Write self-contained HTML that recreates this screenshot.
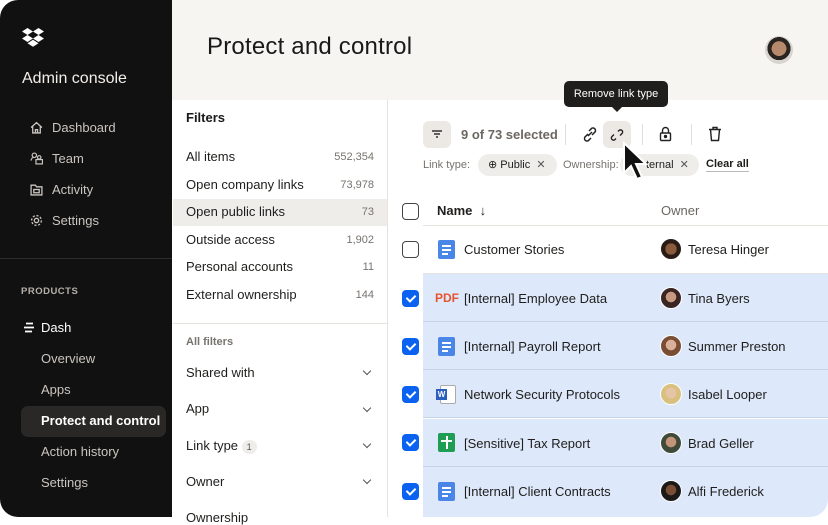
<!DOCTYPE html>
<html><head><meta charset="utf-8"><style>
*{margin:0;padding:0;box-sizing:border-box}
body{width:828px;height:517px;overflow:hidden;background:#fff;font-family:"Liberation Sans",sans-serif;position:relative}
.a{position:absolute}
#side{left:0;top:0;width:172px;height:517px;background:#121111;border-radius:18px 0 0 18px}
.nav{color:#c9c5c0;font-size:13px}
.ic{position:absolute;left:30px}
#hdr{left:172px;top:0;width:656px;height:100px;background:#f7f5f2}
#fp{left:172px;top:100px;width:216px;height:417px;border-right:1px solid #e6e3df}
.fl{font-size:13px;color:#1f1e1c;left:186px}
.fc{font-size:11px;color:#77736e;right:454px}
.chev{right:458px;width:6px;height:6px;border-right:1.3px solid #555;border-bottom:1.3px solid #555;transform:rotate(45deg)}
.row{left:423px;width:405px;height:48px;border-bottom:1px solid #c5d3e8}
.sel{background:#dde8fa}
.cb{left:402px;width:17px;height:17px;border-radius:4px;background:#0b62f0}
.cb:after{content:"";position:absolute;left:5.5px;top:3px;width:4px;height:7px;border-right:2px solid #fff;border-bottom:2px solid #fff;transform:rotate(45deg)}
.nm{left:464px;font-size:13px;color:#1f1e1c}
.ow{left:688px;font-size:13px;color:#1f1e1c}
.av{left:660px;width:22px;height:22px;border-radius:50%;border:1.5px solid #fff}
.doc{left:438px;width:17px;height:19px;border-radius:2px;background:#4a86e8}
.doc i{position:absolute;left:4px;height:1.6px;background:#fff;width:9px}
</style></head><body>
<div class="a" id="side"></div>
<svg class="a" style="left:22px;top:28px" width="22" height="20" viewBox="0 0 22 20"><g fill="#fff"><path d="M5.5 0 0 3.5 5.5 7 11 3.5z"/><path d="M16.5 0 11 3.5 16.5 7 22 3.5z"/><path d="M0 10.5 5.5 14 11 10.5 5.5 7z"/><path d="M16.5 7 11 10.5 16.5 14 22 10.5z"/><path d="M5.5 15.2 11 18.7 16.5 15.2 11 11.7z"/></g></svg>
<div class="a" style="left:22px;top:70px;color:#f2efeb;font-size:16px">Admin console</div>
<svg class="ic" style="top:121px" width="13" height="13" viewBox="0 0 12 12" fill="none" stroke="#c9c5c0" stroke-width="1.2"><path d="M1 6 6 1.5 11 6M2.5 5v6h7V5M5 11V8h2v3"/></svg>
<div class="a nav" style="left:52px;top:120px">Dashboard</div>
<svg class="ic" style="top:152px" width="13" height="13" viewBox="0 0 12 12" fill="none" stroke="#c9c5c0" stroke-width="1.1"><circle cx="4" cy="3" r="2"/><path d="M1 8c0-2 1.5-3 3-3"/><rect x="5.5" y="7" width="6" height="4"/><circle cx="8.5" cy="5" r="1.6"/></svg>
<div class="a nav" style="left:52px;top:151px">Team</div>
<svg class="ic" style="top:183px" width="13" height="13" viewBox="0 0 12 12" fill="none" stroke="#c9c5c0" stroke-width="1.2"><path d="M1 2h4l1 1.5h5V11H1z"/><rect x="3.5" y="6" width="5" height="3"/></svg>
<div class="a nav" style="left:52px;top:182px">Activity</div>
<svg class="ic" style="top:214px" width="13" height="13" viewBox="0 0 12 12" fill="none" stroke="#c9c5c0" stroke-width="1.2"><circle cx="6" cy="6" r="2"/><circle cx="6" cy="6" r="4.5" stroke-dasharray="2 1.5"/></svg>
<div class="a nav" style="left:52px;top:213px">Settings</div>
<div class="a" style="left:0;top:258px;width:172px;height:1px;background:#2e2c2a"></div>
<div class="a" style="left:21px;top:286px;color:#b5b0aa;font-size:9.5px;font-weight:bold;letter-spacing:.5px">PRODUCTS</div>
<svg class="a" style="left:23px;top:322px" width="12" height="11" viewBox="0 0 12 11" stroke="#fff" stroke-width="1.8" fill="none"><path d="M3 1.5h7M1 5.5h10M2 9.5h7"/></svg>
<div class="a" style="left:41px;top:320px;color:#fff;font-size:13px">Dash</div>
<div class="a nav" style="left:41px;top:351px">Overview</div>
<div class="a nav" style="left:41px;top:382px">Apps</div>
<div class="a" style="left:21px;top:406px;width:145px;height:31px;background:#2a2827;border-radius:7px"></div>
<div class="a" style="left:41px;top:413px;color:#fff;font-size:13px;font-weight:bold">Protect and control</div>
<div class="a nav" style="left:41px;top:444px">Action history</div>
<div class="a nav" style="left:41px;top:475px">Settings</div>

<div class="a" id="hdr"></div>
<div class="a" style="left:207px;top:33px;font-size:24px;color:#1a1918;letter-spacing:.2px">Protect and control</div>
<div class="a" style="left:765px;top:36px;width:28px;height:28px;border-radius:50%;background:radial-gradient(circle at 50% 45%,#b58a6c 0 35%,#2a2420 36% 55%,#d8d4cf 56%)"></div>

<div class="a" id="fp"></div>
<div class="a" style="left:186px;top:110px;font-size:13px;font-weight:bold;color:#1a1918">Filters</div>
<div class="a" style="left:173px;top:199px;width:214px;height:27px;background:#efedea"></div>
<div class="a fl" style="top:149px">All items</div><div class="a fc" style="top:151px">552,354</div>
<div class="a fl" style="top:177px">Open company links</div><div class="a fc" style="top:179px">73,978</div>
<div class="a fl" style="top:204px">Open public links</div><div class="a fc" style="top:206px">73</div>
<div class="a fl" style="top:232px">Outside access</div><div class="a fc" style="top:234px">1,902</div>
<div class="a fl" style="top:259px">Personal accounts</div><div class="a fc" style="top:261px">11</div>
<div class="a fl" style="top:287px">External ownership</div><div class="a fc" style="top:289px">144</div>
<div class="a" style="left:173px;top:323px;width:214px;height:1px;background:#e6e3df"></div>
<div class="a" style="left:186px;top:336px;font-size:11px;font-weight:bold;color:#77736e">All filters</div>
<div class="a fl" style="top:365px">Shared with</div><div class="a chev" style="top:368px"></div>
<div class="a fl" style="top:401px">App</div><div class="a chev" style="top:405px"></div>
<div class="a fl" style="top:438px">Link type <span style="display:inline-block;background:#efedea;border-radius:8px;font-size:9px;padding:2px 5px;color:#555">1</span></div><div class="a chev" style="top:441px"></div>
<div class="a fl" style="top:474px">Owner</div><div class="a chev" style="top:477px"></div>
<div class="a fl" style="top:510px">Ownership</div>

<div class="a" style="left:423px;top:121px;width:28px;height:27px;background:#ece9e5;border-radius:6px"></div>
<svg class="a" style="left:431px;top:129px" width="12" height="10" stroke="#333" stroke-width="1.4"><path d="M1 2h10M3 5h6M5 8h2"/></svg>
<div class="a" style="left:461px;top:127px;font-size:13px;font-weight:bold;color:#6b6762">9 of 73 selected</div>
<div class="a" style="left:565px;top:124px;width:1px;height:21px;background:#e1ded9"></div>
<svg class="a" style="left:582px;top:126px" width="16" height="17" viewBox="0 0 16 17" fill="none" stroke="#222" stroke-width="1.5"><path d="M7 5 9 3a2.5 2.5 0 0 1 4 3l-3 3M9 12l-2 2a2.5 2.5 0 0 1-4-3l3-3M6 10l4-4"/></svg>
<div class="a" style="left:603px;top:121px;width:28px;height:27px;background:#ece9e5;border-radius:6px"></div>
<svg class="a" style="left:609px;top:127px" width="16" height="16" viewBox="0 0 16 16" fill="none" stroke="#222" stroke-width="1.4"><path d="M9 4.5l1-1a2 2 0 0 1 3 3l-2 2M7 11.5l-1 1a2 2 0 0 1-3-3l2-2"/></svg>
<div class="a" style="left:642px;top:124px;width:1px;height:21px;background:#e1ded9"></div>
<svg class="a" style="left:659px;top:126px" width="13" height="16" viewBox="0 0 13 16" fill="none" stroke="#222" stroke-width="1.4"><path d="M3.5 7V4.5a3 3 0 0 1 6 0V7"/><rect x="1.5" y="7" width="10" height="7.5" rx="1"/><circle cx="6.5" cy="10.5" r="1" fill="#222"/></svg>
<div class="a" style="left:691px;top:124px;width:1px;height:21px;background:#e1ded9"></div>
<svg class="a" style="left:708px;top:126px" width="14" height="16" viewBox="0 0 14 16" fill="none" stroke="#222" stroke-width="1.4"><path d="M1 3.5h12M5 3.5V1.5h4v2M2.5 3.5l1 11h7l1-11"/></svg>
<div class="a" style="left:564px;top:81px;width:104px;height:26px;background:#1f1e1c;border-radius:5px;color:#fff;font-size:11px;text-align:center;line-height:26px">Remove link type</div>
<div class="a" style="left:611px;top:106px;width:0;height:0;border-left:6px solid transparent;border-right:6px solid transparent;border-top:6px solid #1f1e1c"></div>

<div class="a" style="left:423px;top:159px;font-size:11px;color:#77736e">Link type:</div>
<div class="a" style="left:478px;top:154px;width:79px;height:22px;background:#efedea;border-radius:11px;font-size:11px;color:#1f1e1c;line-height:22px;padding-left:10px">⊕ Public&nbsp;&nbsp;<span style="color:#555">✕</span></div>
<div class="a" style="left:563px;top:159px;font-size:11px;color:#77736e">Ownership:</div>
<div class="a" style="left:620px;top:154px;width:79px;height:22px;background:#efedea;border-radius:11px;font-size:11px;color:#1f1e1c;line-height:22px;padding-left:26px">ternal&nbsp;&nbsp;<span style="color:#555">✕</span></div>
<div class="a" style="left:706px;top:158px;font-size:11px;font-weight:bold;color:#1f1e1c;border-bottom:1.5px solid #bbb;padding-bottom:1px">Clear all</div>
<svg class="a" style="left:620px;top:141px" width="30" height="44" viewBox="0 0 30 44"><path d="M4 2v30l7-7 6 13 5-2-6-13h10z" fill="#111" stroke="#fff" stroke-width="2"/></svg>

<div class="a" style="left:402px;top:203px;width:17px;height:17px;border:1.5px solid #444;border-radius:4px"></div>
<div class="a" style="left:437px;top:203px;font-size:13px;font-weight:bold;color:#1f1e1c">Name&nbsp; ↓</div>
<div class="a" style="left:661px;top:203px;font-size:13px;color:#6b6762">Owner</div>
<div class="a" style="left:423px;top:225px;width:405px;height:1px;background:#e6e3df"></div>

<div class="a row" style="top:226px;border-color:#e6e3df"></div>
<div class="a row sel" style="top:274px"></div>
<div class="a row sel" style="top:322px"></div>
<div class="a row sel" style="top:370px"></div>
<div class="a row sel" style="top:419px"></div>
<div class="a row sel" style="top:467px;border-radius:0 0 18px 0;height:50px;border:0"></div>

<div class="a" style="left:402px;top:241px;width:17px;height:17px;border:1.5px solid #444;border-radius:4px"></div>
<div class="a cb" style="top:290px"></div>
<div class="a cb" style="top:338px"></div>
<div class="a cb" style="top:386px"></div>
<div class="a cb" style="top:434px"></div>
<div class="a cb" style="top:483px"></div>

<div class="a doc" style="top:240px"><i style="top:5px"></i><i style="top:9px"></i><i style="top:13px;width:6px"></i></div>
<div class="a" style="left:435px;top:291px;font-size:12px;font-weight:bold;color:#e8532f">PDF</div>
<div class="a doc" style="top:337px"><i style="top:5px"></i><i style="top:9px"></i><i style="top:13px;width:6px"></i></div>
<div class="a" style="left:440px;top:385px;width:16px;height:19px;border:1px solid #aaa;border-radius:2px;background:#fff"></div>
<div class="a" style="left:436px;top:389px;width:11px;height:11px;background:#2b5fbf;color:#fff;font-size:8px;font-weight:bold;text-align:center;line-height:11px">W</div>
<div class="a" style="left:438px;top:433px;width:17px;height:19px;border-radius:2px;background:#1f9d55"></div>
<div class="a" style="left:446px;top:436px;width:1.6px;height:13px;background:#fff"></div>
<div class="a" style="left:441px;top:440px;width:11px;height:1.6px;background:#fff"></div>
<div class="a doc" style="top:482px"><i style="top:5px"></i><i style="top:9px"></i><i style="top:13px;width:6px"></i></div>

<div class="a nm" style="top:242px">Customer Stories</div>
<div class="a nm" style="top:291px">[Internal] Employee Data</div>
<div class="a nm" style="top:339px">[Internal] Payroll Report</div>
<div class="a nm" style="top:387px">Network Security Protocols</div>
<div class="a nm" style="top:436px">[Sensitive] Tax Report</div>
<div class="a nm" style="top:484px">[Internal] Client Contracts</div>

<div class="a av" style="top:238px;background:radial-gradient(circle at 50% 50%,#8a5a3c 0 40%,#2a1c14 41%)"></div>
<div class="a av" style="top:287px;background:radial-gradient(circle at 50% 45%,#c59a80 0 35%,#3a2522 36%)"></div>
<div class="a av" style="top:335px;background:radial-gradient(circle at 50% 45%,#d9b19a 0 35%,#7a4e34 36%)"></div>
<div class="a av" style="top:383px;background:radial-gradient(circle at 50% 45%,#e6c4a8 0 35%,#d9c07e 36%)"></div>
<div class="a av" style="top:432px;background:radial-gradient(circle at 50% 45%,#c49478 0 35%,#3f4a3a 36%)"></div>
<div class="a av" style="top:480px;background:radial-gradient(circle at 50% 45%,#7a4e34 0 35%,#1c1a18 36%)"></div>

<div class="a ow" style="top:242px">Teresa Hinger</div>
<div class="a ow" style="top:291px">Tina Byers</div>
<div class="a ow" style="top:339px">Summer Preston</div>
<div class="a ow" style="top:387px">Isabel Looper</div>
<div class="a ow" style="top:436px">Brad Geller</div>
<div class="a ow" style="top:484px">Alfi Frederick</div>
</body></html>
